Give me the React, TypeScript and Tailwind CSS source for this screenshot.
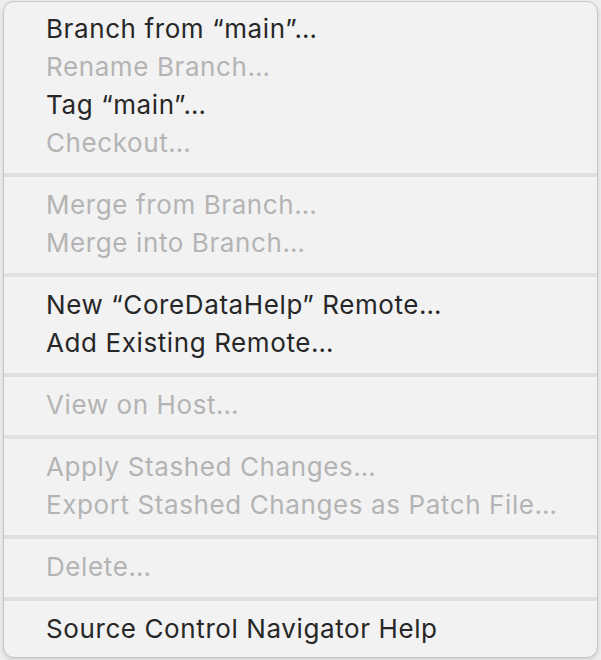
import React from "react";

type Item = { label: string; enabled: boolean };

const groups: Item[][] = [
  [
    { label: "Branch from \u201Cmain\u201D\u2026", enabled: true },
    { label: "Rename Branch\u2026", enabled: false },
    { label: "Tag \u201Cmain\u201D\u2026", enabled: true },
    { label: "Checkout\u2026", enabled: false },
  ],
  [
    { label: "Merge from Branch\u2026", enabled: false },
    { label: "Merge into Branch\u2026", enabled: false },
  ],
  [
    { label: "New \u201CCoreDataHelp\u201D Remote\u2026", enabled: true },
    { label: "Add Existing Remote\u2026", enabled: true },
  ],
  [{ label: "View on Host\u2026", enabled: false }],
  [
    { label: "Apply Stashed Changes\u2026", enabled: false },
    { label: "Export Stashed Changes as Patch File\u2026", enabled: false },
  ],
  [{ label: "Delete\u2026", enabled: false }],
  [{ label: "Source Control Navigator Help", enabled: true }],
];

export default function App() {
  return (
    <div className="w-[601px] h-[660px] bg-[#ededed] pt-px pl-[3px] pr-[3px]">
      <div
        className="w-[595px] h-[657px] bg-[#f2f2f2] border border-[#c6c6c6] rounded-[11px] shadow-[0_2px_4px_rgba(0,0,0,0.12)] pt-[9px] flex flex-col"
        style={{ fontFamily: "Inter, 'Liberation Sans', sans-serif" }}
      >
        {groups.map((g, gi) => (
          <React.Fragment key={gi}>
            {gi > 0 && (
              <div className="h-6 flex items-center">
                <div className="h-1 w-full bg-[#e0e0e0]" />
              </div>
            )}
            {g.map((it) => (
              <div
                key={it.label}
                className={`h-[38px] pl-[42px] pb-[2px] flex items-center text-[26px] leading-none tracking-[0.6px] ${
                  it.enabled ? "text-[#272727]" : "text-[#b4b4b4]"
                }`}
              >
                {it.label}
              </div>
            ))}
          </React.Fragment>
        ))}
      </div>
    </div>
  );
}
